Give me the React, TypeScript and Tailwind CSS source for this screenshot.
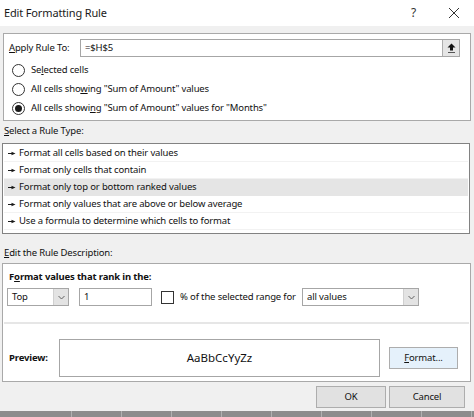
import type { ReactNode } from "react";

const RULE_TYPES = [
  "Format all cells based on their values",
  "Format only cells that contain",
  "Format only top or bottom ranked values",
  "Format only values that are above or below average",
  "Use a formula to determine which cells to format",
];

const SELECTED_RULE = 2;

function Radio({ checked }: { checked?: boolean }) {
  return (
    <span className="w-[13px] h-[13px] rounded-full border border-[#333333] bg-white flex items-center justify-center shrink-0">
      {checked && <span className="w-[7px] h-[7px] rounded-full bg-[#1a1a1a]" />}
    </span>
  );
}

function Chevron() {
  return (
    <svg width="7" height="5" viewBox="0 0 7 5" className="text-[#606060]">
      <path d="M0.5 1 L3.5 4 L6.5 1" fill="none" stroke="currentColor" strokeWidth="1" />
    </svg>
  );
}

function Combo({ value, className }: { value: string; className: string }) {
  return (
    <div className={`h-[18px] border border-[#a6a6a6] bg-white flex items-stretch shrink-0 ${className}`}>
      <span className="flex-1 pl-[4px] leading-[16px]">{value}</span>
      <span className="w-[15px] bg-[#e3e3e3] border-l border-[#d0d0d0] flex items-center justify-center">
        <Chevron />
      </span>
    </div>
  );
}

function RuleArrow() {
  return (
    <svg width="8" height="5" viewBox="0 0 8 5" className="shrink-0">
      <path d="M0 2 H3.5 V0.8 L7.5 2.5 L3.5 4.2 V3 H0 Z" fill="#1a1a1a" />
    </svg>
  );
}

function Button({ children, className }: { children: ReactNode; className: string }) {
  return (
    <div
      className={`h-[22px] bg-[#e1e1e1] border border-[#adadad] flex items-center justify-center shrink-0 ${className}`}
    >
      {children}
    </div>
  );
}

export default function App() {
  return (
    <div className="w-[474px] h-[417px] overflow-hidden bg-[#f0f0f0] text-[9.5px] tracking-[-0.15px] whitespace-nowrap text-[#111111] font-['Noto_Sans',sans-serif] flex flex-col">
      {/* title bar */}
      <div className="h-[26px] bg-white flex items-center shrink-0">
        <span className="pl-[4px] text-[11px] text-[#1a1a1a]">Edit Formatting Rule</span>
        <span className="ml-auto mr-[32px] text-[12px] text-[#333333]">?</span>
        <svg width="12" height="12" viewBox="0 0 12 12" className="mr-[14px]">
          <path d="M1 1 L11 11 M11 1 L1 11" stroke="#333333" strokeWidth="1" />
        </svg>
      </div>

      {/* apply rule to */}
      <div className="mt-[7px] ml-[3px] w-[468px] h-[88px] shrink-0 bg-white border border-[#a9a9a9] pt-[5px]">
        <div className="flex items-center h-[18px]">
          <span className="pl-[5px] w-[76px]">
            <u>A</u>pply Rule To:
          </span>
          <div className="w-[380px] h-[18px] border border-[#a6a6a6] flex items-stretch">
            <span className="flex-1 pl-[4px] leading-[16px]">=$H$5</span>
            <span className="w-[17px] bg-[#e5e5e5] border-l border-[#adadad] flex items-center justify-center">
              <svg width="9" height="11" viewBox="0 0 9 11">
                <path d="M4.5 0.5 L8.5 4.5 H6 V7.5 H3 V4.5 H0.5 Z" fill="#111111" />
                <rect x="1" y="9" width="7" height="1" fill="#555555" />
              </svg>
            </span>
          </div>
        </div>
        <div className="mt-[4px] flex flex-col">
          <div className="h-[19px] flex items-center pl-[8px] gap-[6px]">
            <Radio />
            <span>
              Se<u>l</u>ected cells
            </span>
          </div>
          <div className="h-[19px] flex items-center pl-[8px] gap-[6px]">
            <Radio />
            <span>
              All cells sho<u>w</u>ing "Sum of Amount" values
            </span>
          </div>
          <div className="h-[19px] flex items-center pl-[8px] gap-[6px]">
            <Radio checked />
            <span>
              All cells showi<u>n</u>g "Sum of Amount" values for "Months"
            </span>
          </div>
        </div>
      </div>

      {/* rule type */}
      <div className="mt-[2px] h-[16px] leading-[16px] pl-[4px] shrink-0">
        <u>S</u>elect a Rule Type:
      </div>
      <div className="mt-[4px] ml-[2px] w-[468px] h-[91px] shrink-0 bg-white border border-[#828282] pt-[1px] px-[1px]">
        {RULE_TYPES.map((rule, i) => (
          <div
            key={rule}
            className={`h-[17px] flex items-center gap-[3px] pl-[4px] border-b ${
              i === SELECTED_RULE ? "bg-[#e5e5e5] border-[#e5e5e5]" : "border-[#f2f2f2]"
            }`}
          >
            <RuleArrow />
            <span>{rule}</span>
          </div>
        ))}
      </div>

      {/* rule description */}
      <div className="mt-[11px] h-[16px] leading-[16px] pl-[4px] shrink-0">
        <u>E</u>dit the Rule Description:
      </div>
      <div className="mt-[2px] ml-[2px] w-[469px] h-[119px] shrink-0 bg-white border border-[#a9a9a9] pt-[5px]">
        <div className="h-[16px] leading-[16px] pl-[6px] font-bold">
          F<u>o</u>rmat values that rank in the:
        </div>
        <div className="mt-[3px] h-[18px] flex items-center pl-[4px]">
          <Combo value="Top" className="w-[62px]" />
          <div className="ml-[10px] w-[73px] h-[18px] border border-[#a6a6a6] pl-[4px] leading-[16px] shrink-0">
            1
          </div>
          <span className="ml-[9px] w-[13px] h-[13px] border border-[#333333] bg-white shrink-0" />
          <span className="ml-[6px] w-[122px] shrink-0">% of the selected range for</span>
          <Combo value="all values" className="w-[117px]" />
        </div>
        <div className="mt-[16px] mx-[1px] h-[2px] bg-[#e6e6e6]" />
        <div className="mt-[15px] flex items-center pl-[6px]">
          <span className="w-[50px] font-bold">Preview:</span>
          <div className="w-[321px] h-[38px] border border-[#a6a6a6] flex items-center justify-center text-[11.5px] tracking-normal">
            AaBbCcYyZz
          </div>
          <Button className="ml-[9px] w-[69px] border-[#0078d7] bg-[#e5f1fb]">
            <span>
              <u>F</u>ormat...
            </span>
          </Button>
        </div>
      </div>

      {/* dialog buttons */}
      <div className="mt-[4px] flex justify-end gap-[3px] pr-[9px] shrink-0">
        <Button className="w-[70px]">OK</Button>
        <Button className="w-[76px]">Cancel</Button>
      </div>

      {/* sheet behind the dialog */}
      <div className="mt-[3px] h-[6px] bg-[#8c8c8c] flex pl-[22px] shrink-0">
        {Array.from({ length: 9 }).map((_, i) => (
          <span key={i} className="w-[50px] h-full border-r border-[#b0b0b0]" />
        ))}
      </div>
    </div>
  );
}
